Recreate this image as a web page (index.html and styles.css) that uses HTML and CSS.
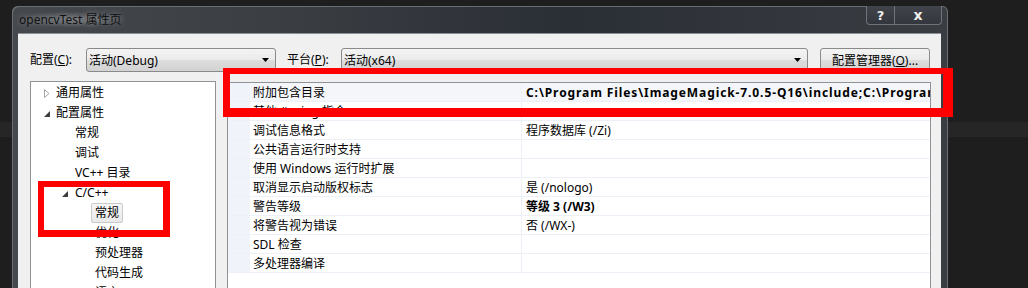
FILE: index.html
```html
<!DOCTYPE html>
<html lang="zh-CN">
<head>
    <meta charset="UTF-8">
    <title>opencvTest 属性页</title>
    <link rel="stylesheet" href="styles.css">
</head>
<body>
    <div class="dialog">
        <div class="titlebar">
            <span class="title">opencvTest 属性页</span>
            <div class="caption-buttons">
                <span class="cap-btn help">?</span>
                <span class="cap-btn close">x</span>
            </div>
        </div>

        <div class="client">
            <div class="config-row">
                <label class="lbl">配置(<u>C</u>):</label>
                <div class="combo combo-config">
                    <span>活动(Debug)</span>
                    <svg class="arrow" width="7" height="4" viewBox="0 0 7 4"><polygon points="0,0 7,0 3.5,4" fill="#000"/></svg>
                </div>
                <label class="lbl lbl-platform">平台(<u>P</u>):</label>
                <div class="combo combo-platform">
                    <span>活动(x64)</span>
                    <svg class="arrow" width="7" height="4" viewBox="0 0 7 4"><polygon points="0,0 7,0 3.5,4" fill="#000"/></svg>
                </div>
                <button class="btn-manager">配置管理器(<u>O</u>)...</button>
            </div>

            <div class="main">
                <ul class="tree">
                    <li class="lvl0">
                        <svg class="exp" width="6" height="9" viewBox="0 0 6 9"><polygon points="0.5,0.5 5,4.5 0.5,8.5" fill="none" stroke="#a6a6a6"/></svg>
                        通用属性
                    </li>
                    <li class="lvl0">
                        <svg class="exp" width="6" height="6" viewBox="0 0 6 6"><polygon points="6,0 6,6 0,6" fill="#3c3c3c"/></svg>
                        配置属性
                    </li>
                    <li class="lvl1">常规</li>
                    <li class="lvl1">调试</li>
                    <li class="lvl1">VC++ 目录</li>
                    <li class="lvl1 has-exp">
                        <svg class="exp" width="6" height="6" viewBox="0 0 6 6"><polygon points="6,0 6,6 0,6" fill="#3c3c3c"/></svg>
                        C/C++
                    </li>
                    <li class="lvl2"><span class="selected">常规</span></li>
                    <li class="lvl2">优化</li>
                    <li class="lvl2">预处理器</li>
                    <li class="lvl2">代码生成</li>
                    <li class="lvl2">语言</li>
                </ul>

                <div class="grid">
                    <div class="row current">
                        <span class="gutter"></span>
                        <span class="name">附加包含目录</span>
                        <span class="value bold wide">C:\Program Files\ImageMagick-7.0.5-Q16\include;C:\Program Files\opencv\build\include</span>
                    </div>
                    <div class="row">
                        <span class="gutter"></span>
                        <span class="name">其他 #using 指令</span>
                        <span class="value"></span>
                    </div>
                    <div class="row">
                        <span class="gutter"></span>
                        <span class="name">调试信息格式</span>
                        <span class="value">程序数据库 (/Zi)</span>
                    </div>
                    <div class="row">
                        <span class="gutter"></span>
                        <span class="name">公共语言运行时支持</span>
                        <span class="value"></span>
                    </div>
                    <div class="row">
                        <span class="gutter"></span>
                        <span class="name">使用 Windows 运行时扩展</span>
                        <span class="value"></span>
                    </div>
                    <div class="row">
                        <span class="gutter"></span>
                        <span class="name">取消显示启动版权标志</span>
                        <span class="value">是 (/nologo)</span>
                    </div>
                    <div class="row">
                        <span class="gutter"></span>
                        <span class="name">警告等级</span>
                        <span class="value bold">等级 3 (/W3)</span>
                    </div>
                    <div class="row">
                        <span class="gutter"></span>
                        <span class="name">将警告视为错误</span>
                        <span class="value">否 (/WX-)</span>
                    </div>
                    <div class="row">
                        <span class="gutter"></span>
                        <span class="name">SDL 检查</span>
                        <span class="value"></span>
                    </div>
                    <div class="row">
                        <span class="gutter"></span>
                        <span class="name">多处理器编译</span>
                        <span class="value"></span>
                    </div>
                </div>
            </div>
        </div>
    </div>

    <!-- annotation boxes drawn over the screenshot -->
    <div class="mark mark-tree"></div>
    <div class="mark mark-grid"></div>
</body>
</html>
```

FILE: styles.css
```css
html, body { margin: 0; padding: 0; }
body {
    width: 1028px; height: 288px; overflow: hidden; position: relative;
    background: linear-gradient(to bottom, #1e1e1e 122px, #262627 122px, #262627 137px, #1e1e1e 137px);
    font-family: "Noto Sans", "Noto Sans CJK SC", sans-serif; font-size: 12px; color: #000;
}

.dialog {
    margin: 6px 0 0 12px; width: 936px; height: 282px; box-sizing: border-box;
    padding: 0 7px 0 6px; border-radius: 6px 6px 0 0;
    background: linear-gradient(to right, #45494e 0, #3a3e43 30%, #2a2e35 60%, #3a3e43 100%);
    box-shadow: inset 1px 1px 0 #6a6d72, inset -1px 0 0 #6a6d72;
}

.titlebar { height: 27px; display: flex; align-items: flex-start; justify-content: space-between; }
.title {
    margin: 6px 0 0 1px; padding: 0 4px 0 0; line-height: 15px; color: #111;
    background: radial-gradient(ellipse at center, rgba(150,152,155,.55) 0, rgba(150,152,155,0) 75%);
    text-shadow: 0 0 6px rgba(255,255,255,.35);
}
.caption-buttons { display: flex; margin-right: -1px; }
.cap-btn {
    height: 18px; display: flex; align-items: center; justify-content: center;
    border: 1px solid #707377; border-top: none; color: #f0f0f0; font-weight: bold;
    font-family: "DejaVu Sans", sans-serif; font-size: 13px;
    background: linear-gradient(#41454b, #33373d);
}
.help { width: 27px; border-radius: 0 0 0 4px; }
.close { width: 46px; border-left: none; border-radius: 0 0 4px 0; font-size: 14px; }

.client {
    height: 255px; background: #f0f0f0; border-top: 1px solid #8c9095;
    box-sizing: border-box; padding: 14px 10px 0 12px;
}

.config-row { display: flex; align-items: center; height: 24px; }
.lbl { width: 56px; line-height: 24px; }
.lbl-platform { margin-left: 11px; width: 54px; }
.combo {
    height: 24px; box-sizing: border-box; border: 1px solid #8a8a8a; border-radius: 3px;
    display: flex; align-items: center; justify-content: space-between; padding: 0 6px 0 2px;
    background: linear-gradient(#f3f3f3 0, #ebebeb 48%, #dddddd 52%, #d2d2d2 100%);
}
.combo-config { width: 190px; }
.combo-platform { width: 467px; }
.btn-manager {
    margin-left: 12px; width: 110px; height: 24px; border: 1px solid #8a8a8a; border-radius: 3px;
    font: inherit; color: #000; padding: 0;
    background: linear-gradient(#f3f3f3 0, #ebebeb 48%, #dddddd 52%, #d2d2d2 100%);
}

.main { display: flex; align-items: flex-start; margin-top: 9px; }

.tree {
    list-style: none; margin: 0; padding: 1px 0 0; width: 186px; height: 230px; box-sizing: border-box;
    border: 1px solid #8f9296; background: #fff; overflow: hidden;
}
.tree li { height: 20px; line-height: 20px; display: flex; align-items: center; white-space: nowrap; }
.lvl0 { padding-left: 13px; }
.lvl0 .exp { width: 6px; margin-right: 6px; }
.lvl0 svg[height="6"] { margin-top: 2px; }
.lvl1 { padding-left: 44px; }
.lvl1.has-exp { padding-left: 31px; }
.has-exp .exp { margin-right: 7px; margin-top: 2px; }
.lvl2 { padding-left: 64px; }
.selected {
    margin-left: -4px; padding: 0 3px; height: 18px; line-height: 18px;
    border: 1px solid #c9c9c9; border-radius: 2px; background: linear-gradient(#f6f6f6, #e9e9e9);
}

.grid {
    margin: 1px 0 0 11px; width: 704px; height: 230px; box-sizing: border-box;
    border: 1px solid #8f9296; background: #fff; overflow: hidden;
}
.row { display: flex; height: 19px; box-sizing: border-box; border-bottom: 1px solid #edf1f7; }
.gutter { width: 22px; flex: none; background: #f0f3f9; }
.name {
    width: 272px; flex: none; padding-left: 3px; box-sizing: border-box; line-height: 19px;
    border-right: 1px solid #edf1f7; white-space: nowrap; overflow: hidden;
}
.value { flex: 1; padding-left: 4px; line-height: 19px; white-space: nowrap; overflow: hidden; }
.bold { font-weight: bold; }
.wide { letter-spacing: 0.9px; }
.current .name, .current .value { background: #f5f6fa; }

.mark { position: absolute; border: 6px solid #ff0000; box-sizing: border-box; }
.mark-tree { left: 38px; top: 181px; width: 132px; height: 56px; border-right-width: 7px; border-bottom-width: 7px; }
.mark-grid { left: 223px; top: 68px; width: 730px; height: 49px; border-left-width: 7px; border-right-width: 10px; border-bottom-width: 9px; }
```
